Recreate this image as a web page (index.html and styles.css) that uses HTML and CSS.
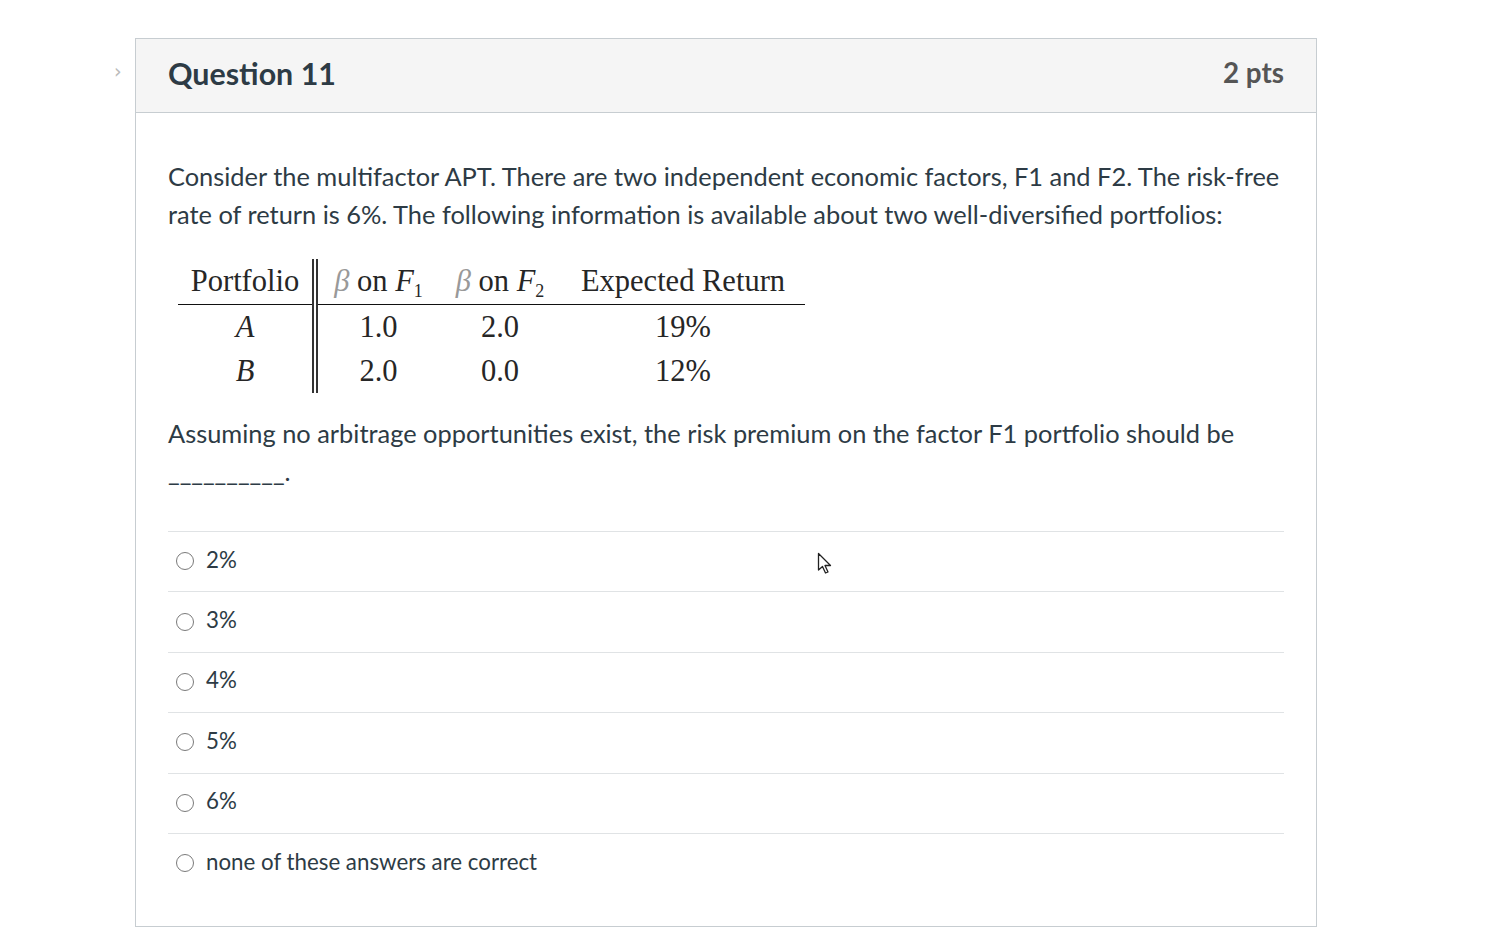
FILE: index.html
```html
<!DOCTYPE html>
<html>
<head>
<meta charset="utf-8">
<link rel="stylesheet" href="styles.css">
</head>
<body>
<div class="page">
  <div class="card">
    <span class="chev">›</span>
    <div class="card-header">
      <h2 class="title">Question 11</h2>
      <span class="pts">2 pts</span>
    </div>
    <div class="card-body">
      <p class="text">Consider the multifactor APT. There are two independent economic factors, F1 and F2. The risk-free rate of return is 6%. The following information is available about two well-diversified portfolios:</p>
      <table class="tex">
        <colgroup><col class="c1"><col class="c2"><col class="c3"><col class="c4"></colgroup>
        <thead>
          <tr><th class="sep">Portfolio</th><th><i class="beta">β</i> on <i>F</i><sub>1</sub></th><th><i class="beta">β</i> on <i>F</i><sub>2</sub></th><th>Expected Return</th></tr>
        </thead>
        <tbody>
          <tr><td class="sep"><i>A</i></td><td>1.0</td><td>2.0</td><td>19%</td></tr>
          <tr><td class="sep"><i>B</i></td><td>2.0</td><td>0.0</td><td>12%</td></tr>
        </tbody>
      </table>
      <p class="text q2">Assuming no arbitrage opportunities exist, the risk premium on the factor F1 portfolio should be __________.</p>
      <ul class="answers">
        <li class="answer"><span class="radio"></span><span>2%</span></li>
        <li class="answer"><span class="radio"></span><span>3%</span></li>
        <li class="answer"><span class="radio"></span><span>4%</span></li>
        <li class="answer"><span class="radio"></span><span>5%</span></li>
        <li class="answer"><span class="radio"></span><span>6%</span></li>
        <li class="answer"><span class="radio"></span><span>none of these answers are correct</span></li>
      </ul>
    </div>
    <svg class="cursor" width="18" height="24" viewBox="0 0 18 24"><path d="M1.5 1.5 L1.5 18 L5.5 14.5 L8.5 21 L11 20 L8 13.5 L13.5 13.5 Z" fill="#fff" stroke="#222" stroke-width="1.3" stroke-linejoin="round"/></svg>
  </div>
</div>
</body>
</html>
```
FILE: styles.css
```css
html, body { margin: 0; padding: 0; background: #fff; }
body { font-family: Lato, "Liberation Sans", sans-serif; color: #2d3b45; }
.page { padding: 38px 0 0 135px; }
.card {
  position: relative;
  width: 1180px;
  border: 1px solid #c7cdd1;
  box-sizing: content-box;
}
.chev {
  position: absolute;
  left: -22px;
  top: 21px;
  font-size: 19px;
  color: #bbb;
  font-family: "DejaVu Sans", sans-serif;
}
.card-header {
  display: flex;
  justify-content: space-between;
  align-items: center;
  height: 74px;
  box-sizing: border-box;
  padding: 0 32px 6px;
  background: #f5f5f5;
  border-bottom: 1px solid #c7cdd1;
}
.title { margin: 0; font-size: 30.4px; font-weight: 700; color: #2d3b45; }
.pts { font-size: 27.8px; font-weight: 700; color: #555; }
.card-body { padding: 44px 32px 33px; }
.text { margin: 0; font-size: 25.4px; line-height: 38px; }
.tex {
  margin: 26px 0 21px 10px;
  border-collapse: collapse;
  font-family: "Liberation Serif", serif;
  font-size: 30.5px;
  color: #262626;
}
.c1 { width: 137px; }
.c2 { width: 124px; }
.c3 { width: 122px; }
.c4 { width: 244px; }
.tex th, .tex td { text-align: center; padding: 0; font-weight: 400; white-space: nowrap; }
.tex thead th { height: 45px; border-bottom: 1.5px solid #111; }
.tex tbody td { height: 44px; }
.tex .sep { border-right: 6px double #333; }
.tex sub { font-size: 18px; vertical-align: -6px; line-height: 0; }
.beta { color: #999; }
.answers { list-style: none; margin: 41px 0 0; padding: 0; }
.answer {
  display: flex;
  align-items: center;
  gap: 12px;
  height: 60.4px;
  box-sizing: border-box;
  padding: 0 0 5px 8px;
  border-top: 1px solid #e0e3e5;
  font-size: 22.3px;
  color: #2d3b45;
}
.radio {
  width: 16px;
  height: 16px;
  margin-top: 4px;
  border: 1.4px solid #7a7a7a;
  border-radius: 50%;
  flex: none;
}
.cursor { position: absolute; left: 681px; top: 513px; }
```
